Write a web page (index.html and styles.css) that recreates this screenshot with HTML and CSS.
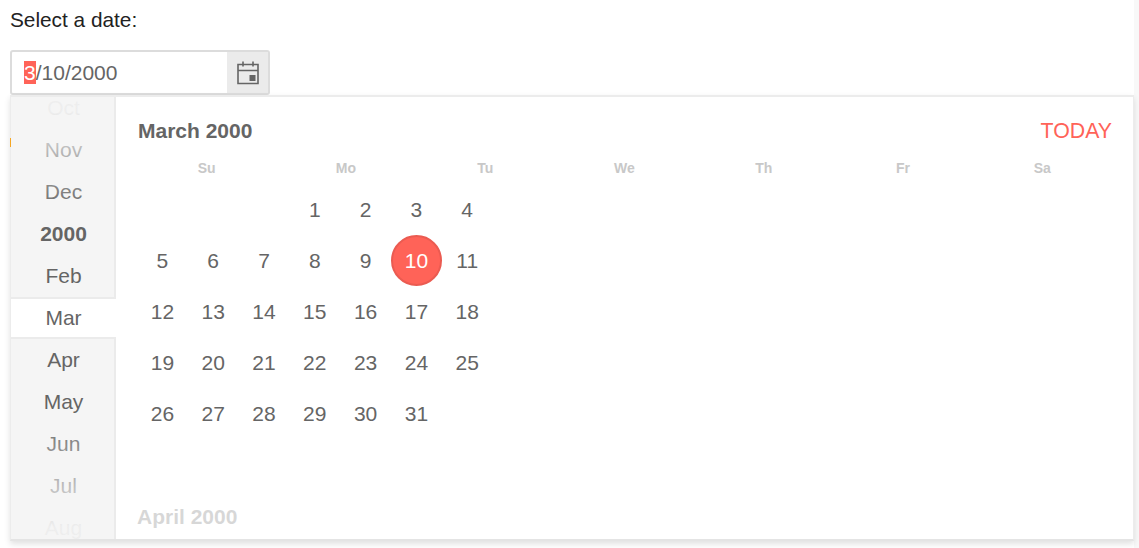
FILE: index.html
```html
<!DOCTYPE html>
<html lang="en">
<head>
  <meta charset="UTF-8" />
  <title>Select a date</title>
  <link rel="stylesheet" href="styles.css">
</head>
<body>
  <div class="page">
    <label class="date-label" for="date">Select a date:</label>

    <div class="date-input">
      <div class="date-value" id="date"><span class="date-part">3</span>/10/2000</div>
      <button class="date-button" type="button" aria-label="Open calendar">
        <svg class="date-icon" viewBox="0 0 22 24">
          <path d="M1 3.5h20v19h-20z M1 9.5h20"/>
          <path d="M6 0.5v5 M16 0.5v5"/>
          <rect x="12.5" y="14" width="6" height="6"/>
        </svg>
      </button>
    </div>

    <div class="peek"></div>

    <div class="calendar">
      <div class="nav-list">
        <div class="nav-item">Oct</div>
        <div class="nav-item">Nov</div>
        <div class="nav-item">Dec</div>
        <div class="nav-item nav-year">2000</div>
        <div class="nav-item">Feb</div>
        <div class="nav-item nav-current">Mar</div>
        <div class="nav-item">Apr</div>
        <div class="nav-item">May</div>
        <div class="nav-item">Jun</div>
        <div class="nav-item">Jul</div>
        <div class="nav-item">Aug</div>
      </div>

      <div class="month-view">
        <div class="month-head">
          <div class="month-title">March 2000</div>
          <a class="today-link" href="#">TODAY</a>
        </div>

        <div class="weekdays">
          <span>Su</span><span>Mo</span><span>Tu</span><span>We</span><span>Th</span><span>Fr</span><span>Sa</span>
        </div>

        <div class="days">
          <span class="day-empty"></span><span class="day-empty"></span><span class="day-empty"></span>
          <span class="day">1</span><span class="day">2</span><span class="day">3</span><span class="day">4</span>
          <span class="day">5</span><span class="day">6</span><span class="day">7</span><span class="day">8</span><span class="day">9</span><span class="day day-selected">10</span><span class="day">11</span>
          <span class="day">12</span><span class="day">13</span><span class="day">14</span><span class="day">15</span><span class="day">16</span><span class="day">17</span><span class="day">18</span>
          <span class="day">19</span><span class="day">20</span><span class="day">21</span><span class="day">22</span><span class="day">23</span><span class="day">24</span><span class="day">25</span>
          <span class="day">26</span><span class="day">27</span><span class="day">28</span><span class="day">29</span><span class="day">30</span><span class="day">31</span>
        </div>

        <div class="month-title month-next">April 2000</div>
      </div>
    </div>
  </div>
</body>
</html>
```

FILE: styles.css
```css
html,
body {
  margin: 0;
  padding: 0;
  height: 548px;
  overflow: hidden;
  background: #f8f8f8;
}

body {
  font-family: 'Liberation Sans', Arial, sans-serif;
  font-size: 21px;
  color: #656565;
}

.page {
  position: relative;
  box-sizing: border-box;
  width: 1134px;
  height: 548px;
  padding: 9px 0 0 10px;
  background: #fff;
}

.date-label {
  display: block;
  height: 41px;
  line-height: 22px;
  font-size: 20.8px;
  color: #222;
}

.date-input {
  display: flex;
  width: 260px;
  height: 45px;
  box-sizing: border-box;
  border: 2px solid #dcdcdc;
  border-radius: 3px;
  background: #fff;
}

.date-value {
  flex: 1;
  padding-left: 12px;
  line-height: 41px;
  font-size: 21px;
  color: #656565;
}

.date-part {
  background: #ff6358;
  color: #fff;
}

.date-button {
  width: 41px;
  padding: 0;
  border: 0;
  background: #ebebeb;
  display: flex;
  align-items: center;
  justify-content: center;
}

.date-icon {
  width: 22px;
  height: 24px;
  fill: none;
  stroke: #656565;
  stroke-width: 1.6;
}

.date-icon rect {
  fill: #656565;
  stroke: none;
}

.peek {
  position: absolute;
  z-index: 1;
  left: 10px;
  top: 138px;
  width: 1px;
  height: 9px;
  background: #f5a623;
}

.calendar {
  position: relative;
  display: flex;
  height: 446px;
  box-sizing: border-box;
  border: 1px solid #ececec;
  border-top-width: 2px;
  border-bottom: 2px solid #e4e4e4;
  background: #fff;
  overflow: hidden;
  box-shadow: 0 3px 6px rgba(0, 0, 0, 0.12);
}

.nav-list {
  position: relative;
  width: 103px;
  flex: none;
  margin-top: -10px;
  border-right: 2px solid #ebebeb;
  background: #f5f5f5;
  text-align: center;
}

.nav-list::before,
.nav-list::after {
  content: '';
  position: absolute;
  left: 0;
  right: 0;
  height: 126px;
  pointer-events: none;
}

.nav-list::before {
  top: 0;
  background: linear-gradient(to bottom, rgba(245, 245, 245, 0.95) 20%, rgba(245, 245, 245, 0));
}

.nav-list::after {
  bottom: 0;
  background: linear-gradient(to top, rgba(245, 245, 245, 0.95) 10%, rgba(245, 245, 245, 0));
}

.nav-item {
  height: 42px;
  padding-left: 2px;
  line-height: 42px;
}

.nav-year {
  font-weight: 700;
}

.nav-current {
  box-sizing: border-box;
  line-height: 38px;
  margin-right: -2px;
  padding-left: 0;
  border-top: 2px solid #ebebeb;
  border-bottom: 2px solid #ebebeb;
  background: #fff;
}

.month-view {
  position: relative;
  flex: 1;
  padding: 0 21px;
  overflow: hidden;
}

.month-head {
  display: flex;
  justify-content: space-between;
  align-items: center;
  height: 68px;
  margin-bottom: -4px;
  padding-left: 1px;
}

.month-title {
  font-size: 21px;
  font-weight: 700;
}

.today-link {
  font-size: 21.3px;
  color: #ff6358;
  text-decoration: none;
}

.weekdays {
  display: grid;
  grid-template-columns: repeat(7, 1fr);
  height: 14px;
  margin-bottom: 9px;
  line-height: 14px;
  font-size: 14px;
  font-weight: 700;
  color: #c8c8c8;
  text-align: center;
}

.days {
  display: grid;
  grid-template-columns: repeat(7, 50.8px);
  grid-auto-rows: 51px;
  height: 306px;
  font-size: 21px;
  text-align: center;
}

.day {
  line-height: 51px;
}

.day-selected {
  box-sizing: border-box;
  width: 51px;
  height: 51px;
  line-height: 47px;
  border: 2px solid #eb5b51;
  border-radius: 50%;
  background: #ff6358;
  color: #fff;
}

.month-next {
  margin-top: 15px;
  opacity: 0.25;
}
```
